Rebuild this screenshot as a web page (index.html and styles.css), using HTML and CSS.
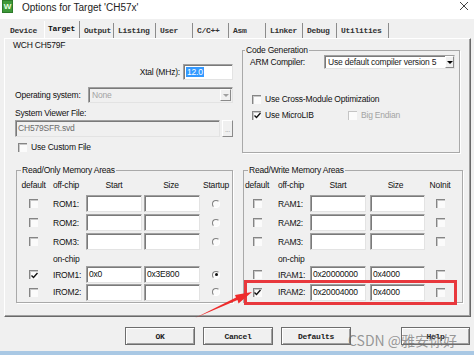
FILE: index.html
```html
<!DOCTYPE html>
<html>

<head>
    <title>Options for Target 'CH57x'</title>
    <link rel="stylesheet" href="styles.css">
</head>

<body>
    <div class="window">
        <div class="titlebar">
            <span class="app-icon">W</span>
            <span class="title">Options for Target 'CH57x'</span>
            <svg class="close" width="10" height="10" viewBox="0 0 10 10">
                <path d="M1 1 L9 9 M9 1 L1 9" stroke="#444" stroke-width="1" fill="none" />
            </svg>
        </div>

        <div class="tabs">
            <span class="tab first">Device</span>
            <span class="tab active">Target</span>
            <span class="tab">Output</span>
            <span class="tab">Listing</span>
            <span class="tab">User</span>
            <span class="tab">C/C++</span>
            <span class="tab">Asm</span>
            <span class="tab">Linker</span>
            <span class="tab">Debug</span>
            <span class="tab">Utilities</span>
        </div>

        <div class="panel">
            <div class="top">
                <div class="left-col">
                    <div class="device-name">WCH CH579F</div>
                    <div class="xtal-row">
                        <span>Xtal (MHz):</span>
                        <span class="field xtal"><span class="selected">12.0</span></span>
                    </div>
                    <div class="os-row">
                        <span class="os-label">Operating system:</span>
                        <span class="combo disabled">
                            <span class="combo-text">None</span>
                            <span class="combo-btn"><span class="arrow"></span></span>
                        </span>
                    </div>
                    <div class="svf-label">System Viewer File:</div>
                    <div class="file-row">
                        <span class="field disabled">CH579SFR.svd</span>
                        <span class="dots">...</span>
                    </div>
                    <div class="check-row custom">
                        <span class="chk"></span>
                        <span>Use Custom File</span>
                    </div>
                </div>

                <fieldset class="group codegen">
                    <legend>Code Generation</legend>
                    <div class="compiler-row">
                        <span class="compiler-label">ARM Compiler:</span>
                        <span class="combo compiler">
                            <span class="combo-text">Use default compiler version 5</span>
                            <span class="combo-btn"><span class="arrow"></span></span>
                        </span>
                    </div>
                    <div class="check-row cross">
                        <span class="chk"></span>
                        <span>Use Cross-Module Optimization</span>
                    </div>
                    <div class="lib-row">
                        <div class="check-row microlib">
                            <span class="chk on"><svg width="7" height="7" viewBox="0 0 7 7"><path d="M0.5 3.5 L2.5 5.5 L6.5 1" stroke="#111" stroke-width="1.4" fill="none" /></svg></span>
                            <span>Use MicroLIB</span>
                        </div>
                        <div class="check-row off">
                            <span class="chk"></span>
                            <span>Big Endian</span>
                        </div>
                    </div>
                </fieldset>
            </div>

            <div class="mem">
                <fieldset class="group mem-box">
                    <legend>Read/Only Memory Areas</legend>
                    <div class="mem-grid ro">
                        <span class="head">default</span>
                        <span class="head label">off-chip</span>
                        <span class="head">Start</span>
                        <span class="head">Size</span>
                        <span class="head">Startup</span>

                        <span class="chk"></span>
                        <span class="label">ROM1:</span>
                        <span class="field"></span>
                        <span class="field size"></span>
                        <span class="radio"></span>

                        <span class="chk"></span>
                        <span class="label">ROM2:</span>
                        <span class="field"></span>
                        <span class="field size"></span>
                        <span class="radio"></span>

                        <span class="chk"></span>
                        <span class="label">ROM3:</span>
                        <span class="field"></span>
                        <span class="field size"></span>
                        <span class="radio"></span>

                        <span></span>
                        <span class="label">on-chip</span>
                        <span></span>
                        <span></span>
                        <span></span>

                        <span class="chk on"><svg width="7" height="7" viewBox="0 0 7 7"><path d="M0.5 3.5 L2.5 5.5 L6.5 1" stroke="#111" stroke-width="1.4" fill="none" /></svg></span>
                        <span class="label">IROM1:</span>
                        <span class="field">0x0</span>
                        <span class="field size">0x3E800</span>
                        <span class="radio on"></span>

                        <span class="chk"></span>
                        <span class="label">IROM2:</span>
                        <span class="field"></span>
                        <span class="field size"></span>
                        <span class="radio"></span>
                    </div>
                </fieldset>

                <fieldset class="group mem-box">
                    <legend>Read/Write Memory Areas</legend>
                    <div class="mem-grid rw">
                        <span class="head">default</span>
                        <span class="head label">off-chip</span>
                        <span class="head">Start</span>
                        <span class="head">Size</span>
                        <span class="head">NoInit</span>

                        <span class="chk"></span>
                        <span class="label">RAM1:</span>
                        <span class="field"></span>
                        <span class="field size"></span>
                        <span class="chk"></span>

                        <span class="chk"></span>
                        <span class="label">RAM2:</span>
                        <span class="field"></span>
                        <span class="field size"></span>
                        <span class="chk"></span>

                        <span class="chk"></span>
                        <span class="label">RAM3:</span>
                        <span class="field"></span>
                        <span class="field size"></span>
                        <span class="chk"></span>

                        <span></span>
                        <span class="label">on-chip</span>
                        <span></span>
                        <span></span>
                        <span></span>

                        <span class="chk"></span>
                        <span class="label">IRAM1:</span>
                        <span class="field">0x20000000</span>
                        <span class="field size">0x4000</span>
                        <span class="chk"></span>

                        <span class="chk on"><svg width="7" height="7" viewBox="0 0 7 7"><path d="M0.5 3.5 L2.5 5.5 L6.5 1" stroke="#111" stroke-width="1.4" fill="none" /></svg></span>
                        <span class="label">IRAM2:</span>
                        <span class="field">0x20004000</span>
                        <span class="field size">0x4000</span>
                        <span class="chk"></span>
                    </div>
                </fieldset>
            </div>
        </div>

        <div class="buttons">
            <button class="btn">OK</button>
            <button class="btn">Cancel</button>
            <button class="btn">Defaults</button>
            <button class="btn help">Help</button>
        </div>

        <!-- annotation drawn over the screenshot -->
        <div class="highlight"></div>
        <svg class="arrow-note" width="474" height="355" viewBox="0 0 474 355">
            <polygon points="195,318 237.5,300 238.5,303.5 252,292 235,295 236,297.5" fill="#ee2b2b" />
        </svg>
        <div class="watermark">CSDN @雅安你好</div>
    </div>
</body>

</html>
```

FILE: styles.css
```css
body {
    margin: 0;
    width: 474px;
    height: 355px;
    overflow: hidden;
    background-color: #f0f0f0;
    font-family: "Liberation Sans", Arial, sans-serif;
    font-size: 8.5px;
    letter-spacing: -0.2px;
    color: #111;
}

.window {
    position: relative;
    height: 355px;
    box-sizing: border-box;
    display: flex;
    flex-direction: column;
    border-bottom: 4px solid #a9c8e4;
}

/* title bar */

.titlebar {
    height: 19px;
    flex: none;
    background-color: #ffffff;
    display: flex;
    align-items: flex-start;
}

.app-icon {
    width: 9px;
    height: 11px;
    margin-left: 2px;
    background-color: #3f9a3a;
    border: 1px solid #2d7a2a;
    color: #e8ffe0;
    font-size: 8px;
    font-weight: bold;
    line-height: 11px;
    text-align: center;
    letter-spacing: 0;
}

.title {
    margin-left: 9px;
    margin-top: 2px;
    font-size: 10px;
    line-height: 12px;
    letter-spacing: 0;
    color: #222;
}

.close {
    margin-left: auto;
    margin-right: 5px;
    margin-top: 1px;
}

/* tabs */

.tabs {
    height: 19px;
    flex: none;
    display: grid;
    grid-template-columns: 44px 36px 34px 42px 37px 36px 37px 37px 34px 52px;
    align-items: end;
    font-family: "Liberation Mono", monospace;
    font-size: 8px;
    font-weight: bold;
    letter-spacing: -0.3px;
    color: #333;
}

.tab {
    height: 15px;
    line-height: 15px;
    padding-left: 4px;
    border-right: 1px solid #8c8c8c;
    box-sizing: border-box;
    white-space: nowrap;
}

.tab.first {
    padding-left: 10px;
    border-right: none;
}

.tab.active {
    height: 17px;
    padding-bottom: 2px;
    padding-left: 3px;
    border-left: 1px solid #ffffff;
    color: #111;
}

/* main panel */

.panel {
    height: 279px;
    flex: none;
    box-sizing: border-box;
    margin: 0 3px 0 4px;
    padding: 0 6px 0 10px;
    border: 1px solid;
    border-color: #ffffff #696969 #696969 #ffffff;
    box-shadow: inset -1px -1px 0 #a0a0a0;
}

.top {
    display: grid;
    grid-template-columns: 218px 218px;
    column-gap: 9px;
    align-items: start;
}

.device-name {
    line-height: 12px;
    margin-left: -2px;
}

.xtal-row {
    display: flex;
    justify-content: flex-end;
    align-items: center;
    gap: 3px;
    height: 16px;
    margin-top: 13px;
}

.os-row {
    display: flex;
    align-items: center;
    height: 16px;
    margin-top: 7px;
    white-space: nowrap;
}

.os-label {
    width: 73px;
}

.svf-label {
    margin-top: 4px;
    line-height: 12px;
}

.file-row {
    display: flex;
    gap: 2px;
    height: 17px;
    margin-top: 1px;
}

.check-row {
    display: flex;
    align-items: center;
    gap: 4px;
    line-height: 12px;
    height: 12px;
    white-space: nowrap;
}

.check-row.custom {
    margin-top: 4px;
    margin-left: 3px;
}

/* inputs */

.field {
    box-sizing: border-box;
    height: 17px;
    padding: 1px 2px 0 2px;
    line-height: 13px;
    background-color: #ffffff;
    border: 1px solid;
    border-color: #a0a0a0 #e3e3e3 #e3e3e3 #a0a0a0;
    box-shadow: inset 1px 1px 0 #7a7a7a;
    white-space: nowrap;
    overflow: hidden;
}

.field.xtal {
    width: 50px;
    height: 16px;
}

.selected {
    background-color: #3399ff;
    color: #ffffff;
    padding: 0 1px;
}

.field.disabled {
    width: 205px;
    background-color: #f0f0f0;
    color: #6d6d6d;
}

.dots {
    width: 11px;
    box-sizing: border-box;
    border: 1px solid;
    border-color: #ffffff #8a8a8a #8a8a8a #ffffff;
    color: #999;
    font-size: 7px;
    text-align: center;
    line-height: 17px;
}

.combo {
    box-sizing: border-box;
    display: flex;
    align-items: stretch;
    height: 16px;
    border: 1px solid;
    border-color: #a0a0a0 #e3e3e3 #e3e3e3 #a0a0a0;
    box-shadow: inset 1px 1px 0 #7a7a7a;
    background-color: #ffffff;
}

.combo.disabled {
    width: 145px;
    background-color: #f0f0f0;
    color: #a3a3a3;
}

.combo-text {
    flex: 1;
    padding-left: 3px;
    line-height: 14px;
    white-space: nowrap;
    overflow: hidden;
}

.combo-btn {
    width: 11px;
    margin: 1px;
    box-sizing: border-box;
    border: 1px solid;
    border-color: #ffffff #8a8a8a #8a8a8a #ffffff;
    background-color: #f0f0f0;
    display: flex;
    align-items: center;
    justify-content: center;
}

.arrow {
    width: 0;
    height: 0;
    border-left: 3px solid transparent;
    border-right: 3px solid transparent;
    border-top: 3px solid #a0a0a0;
}

/* group boxes */

.group {
    margin: 0;
    padding: 0;
    min-width: 0;
    border: 1px solid #a9a9a9;
    box-shadow: 1px 1px 0 #ffffff;
}

.group legend {
    margin-left: 2px;
    padding: 0 1px;
    line-height: 10px;
}

.codegen {
    margin-top: 6px;
    padding-bottom: 31px;
}

.compiler-row {
    display: flex;
    align-items: center;
    height: 14px;
    margin-left: 7px;
}

.compiler-label {
    width: 74px;
}

.combo.compiler {
    width: 131px;
    height: 14px;
    color: #222;
}

.compiler .combo-text {
    line-height: 12px;
}

.compiler .combo-btn {
    width: 9px;
    margin: 0 0 0 1px;
}

.compiler .arrow {
    border-top-color: #000;
}

.check-row.cross {
    margin-top: 24px;
    margin-left: 9px;
}

.lib-row {
    display: flex;
    margin-top: 4px;
    margin-left: 9px;
}

.check-row.microlib {
    width: 96px;
}

.check-row.off {
    color: #a3a3a3;
}

.check-row.off .chk {
    border-color: #c4c4c4;
    box-shadow: none;
}

/* check boxes and radios */

.chk {
    width: 9px;
    height: 9px;
    box-sizing: border-box;
    border-top: 1px solid #858585;
    border-left: 1px solid #858585;
    box-shadow: inset 1px 1px 0 #c8c8c8;
    background-color: #fbfbfb;
    display: flex;
    align-items: center;
    justify-content: center;
    flex: none;
}

.radio {
    width: 8px;
    height: 8px;
    box-sizing: border-box;
    border-radius: 50%;
    border: 1px solid;
    border-color: #808080 #ffffff #ffffff #808080;
    background-color: #fbfbfb;
    display: flex;
    align-items: center;
    justify-content: center;
}

.radio.on::after {
    content: "";
    width: 3px;
    height: 3px;
    border-radius: 50%;
    background-color: #111;
}

/* memory areas */

.mem {
    display: grid;
    grid-template-columns: 217px 220px;
    column-gap: 10px;
    margin-top: 12px;
    margin-left: 1px;
}

.mem-box {
    padding: 1px 0;
}

.mem-box legend {
    margin-left: 4px;
}

.mem-grid {
    display: grid;
    grid-template-rows: 18px 19px 19px 19px 15px 17px 18px;
    align-items: center;
    justify-items: center;
    white-space: nowrap;
}

.mem-grid.ro {
    grid-template-columns: 33px 36px 56px 58px 32px;
}

.mem-grid.rw {
    grid-template-columns: 26px 40px 56px 59px 30px;
}

.mem-grid .label {
    justify-self: start;
    padding-left: 3px;
}

.mem-grid.rw .label {
    padding-left: 8px;
}

.mem-grid .field {
    width: 56px;
    justify-self: start;
}

.mem-grid .field.size {
    justify-self: end;
}

.mem-grid.rw .field.size {
    width: 55px;
}

/* dialog buttons */

.buttons {
    display: flex;
    gap: 8px;
    margin-top: 10px;
    padding: 0 4px 0 125px;
}

.btn {
    width: 70px;
    height: 18px;
    box-sizing: border-box;
    padding: 0;
    border: 1px solid #6d6d6d;
    background-color: #f0f0f0;
    box-shadow: inset 1px 1px 0 #ffffff, inset -1px -1px 0 #a0a0a0;
    font-family: "Liberation Mono", monospace;
    font-size: 8px;
    font-weight: bold;
    letter-spacing: -0.3px;
    color: #222;
}

.btn.help {
    width: 69px;
    margin-left: auto;
}

/* annotation overlay */

.highlight {
    position: absolute;
    left: 244px;
    top: 280px;
    width: 213px;
    height: 25px;
    box-sizing: border-box;
    border: 3px solid #e8383d;
}

.arrow-note {
    position: absolute;
    left: 0;
    top: 0;
    pointer-events: none;
}

.watermark {
    position: absolute;
    left: 348px;
    top: 331px;
    font-family: "Noto Sans CJK SC", sans-serif;
    font-size: 14px;
    line-height: 18px;
    letter-spacing: 0;
    color: rgba(110, 110, 110, 0.7);
    white-space: nowrap;
}
```
